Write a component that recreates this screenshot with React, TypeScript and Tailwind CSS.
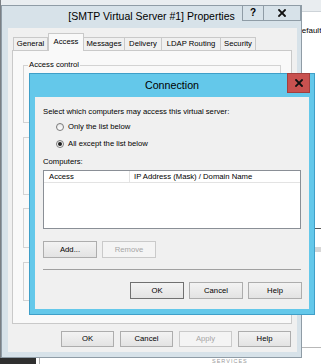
import React from "react";

const font = "font-['Liberation_Sans',Arial,sans-serif]";

type BtnProps = { label: string; w?: string; h?: string; isDefault?: boolean; disabled?: boolean };

const WinButton = ({ label, w = "w-[54px]", h = "h-[17px]", isDefault, disabled }: BtnProps) => {
  const border = isDefault ? "border-[#707070]" : disabled ? "border-[#cacaca]" : "border-[#adadad]";
  const face = disabled
    ? "bg-[#f4f4f4] text-[#a6a6a6]"
    : "bg-linear-to-b from-[#f3f3f3] to-[#e3e3e3] text-black";
  return (
    <div className={`${w} ${h} flex items-center justify-center border ${border} ${face}`}>
      {label}
    </div>
  );
};

const Radio = ({ checked, label }: { checked?: boolean; label: string }) => (
  <div className="flex items-center h-[10px] ml-[13px] gap-[4px]">
    <span className="w-[8px] h-[8px] rounded-full border border-[#7a7a7a] bg-linear-to-b from-[#e8e8e8] to-white flex items-center justify-center">
      {checked && <span className="w-[4px] h-[4px] rounded-full bg-[#1e1e1e]" />}
    </span>
    <span>{label}</span>
  </div>
);

const CloseX = ({ size = 8 }: { size?: number }) => (
  <svg width={size} height={size} viewBox="0 0 8 8">
    <path d="M1 1 L7 7 M7 1 L1 7" stroke="#111" strokeWidth="1.8" strokeLinecap="square" />
  </svg>
);

const tabs = [
  { label: "General", w: "w-[35px]" },
  { label: "Access", w: "w-[36px]", active: true },
  { label: "Messages", w: "w-[41px]" },
  { label: "Delivery", w: "w-[37px]" },
  { label: "LDAP Routing", w: "w-[59px]" },
  { label: "Security", w: "w-[35px]" },
];

const PropertiesWindow = () => (
  <div className="absolute left-[1px] top-[5px] w-[301px] h-[353px] border border-[#8f9ca6] bg-[#d7e2e9] flex flex-col">
    <div className="relative h-[22px] shrink-0 flex items-center justify-center text-[10.5px] text-black">
      [SMTP Virtual Server #1] Properties
      <div className="absolute right-0 top-[-1px] flex">
        <div className="w-[22px] h-[16px] border border-[#8f9ca6] flex items-center justify-center text-[10px] font-bold leading-none">
          ?
        </div>
        <div className="w-[37px] h-[16px] border border-l-0 border-[#8f9ca6] flex items-center justify-center">
          <CloseX />
        </div>
      </div>
    </div>

    <div className="ml-[6px] w-[289px] h-[324px] bg-[#f0f0f0] flex flex-col pt-[5px] pl-[4px]">
      <div className="relative z-10 flex items-end h-[17px] pl-[1px]">
        {tabs.map((t) =>
          t.active ? (
            <div
              key={t.label}
              className={`${t.w} h-[18px] -mb-[1px] bg-[#f9f9f9] border border-b-0 border-[#c9c9c9] flex items-start justify-center pt-[3px] leading-[10px]`}
            >
              {t.label}
            </div>
          ) : (
            <div
              key={t.label}
              className={`${t.w} h-[13px] bg-[#f0f0f0] border-t border-r border-[#c9c9c9] first:border-l flex items-center justify-center leading-[10px]`}
            >
              {t.label}
            </div>
          )
        )}
      </div>

      <div className="w-[280px] h-[274px] border border-[#c9c9c9] bg-[#f9f9f9] pl-[10px] pt-[9px] flex flex-col">
        <fieldset className="w-[258px] h-[63px] border border-[#d3d3d3]">
          <legend className="ml-[4px] px-[1px] leading-[10px]">Access control</legend>
        </fieldset>
        <div className="mt-[14px] w-[258px] h-[58px] border border-[#d3d3d3]" />
        <div className="mt-[13px] w-[258px] h-[40px] border border-[#d3d3d3]" />
        <div className="mt-[14px] w-[258px] h-[39px] border border-[#d3d3d3]" />
      </div>

      <div className="mt-[7px] flex justify-end gap-[6px] pr-[6px]">
        <WinButton label="OK" w="w-[53px]" h="h-[16px]" />
        <WinButton label="Cancel" w="w-[53px]" h="h-[16px]" />
        <WinButton label="Apply" w="w-[53px]" h="h-[16px]" disabled />
        <WinButton label="Help" w="w-[53px]" h="h-[16px]" />
      </div>
    </div>
  </div>
);

const ConnectionDialog = () => (
  <div className="absolute left-[29px] top-[73px] w-[286px] h-[242px] border border-[#3f9fc8] bg-[#64c8ea] flex flex-col">
    <div className="relative h-[23px] shrink-0 flex items-center justify-center text-[10.7px] text-black">
      Connection
      <div className="absolute right-[4px] top-[-1px] w-[23px] h-[20px] bg-[#c8514f] border border-[#a33f3d] flex items-center justify-center">
        <CloseX />
      </div>
    </div>

    <div className="ml-[5px] w-[274px] h-[212px] bg-[#f0f0f0] flex flex-col px-[8px] pt-[10px] leading-[10px]">
      <div>Select which computers may access this virtual server:</div>
      <div className="mt-[5px]">
        <Radio label="Only the list below" />
      </div>
      <div className="mt-[7px]">
        <Radio label="All except the list below" checked />
      </div>
      <div className="mt-[8px]">Computers:</div>

      <div className="mt-[3px] h-[59px] border border-[#8a8f96] bg-white flex flex-col">
        <div className="h-[12px] flex border-b border-[#e3e3e3]">
          <div className="w-[86px] border-r border-[#e3e3e3] pl-[5px] flex items-center">Access</div>
          <div className="flex-1 pl-[4px] flex items-center">IP Address (Mask) / Domain Name</div>
        </div>
      </div>

      <div className="mt-[12px] flex gap-[5px]">
        <WinButton label="Add..." />
        <WinButton label="Remove" disabled />
      </div>

      <div className="mt-[11px] h-px bg-[#a0a0a0]" />

      <div className="mt-[12px] flex justify-end gap-[5px] -mr-[1px]">
        <WinButton label="OK" isDefault />
        <WinButton label="Cancel" />
        <WinButton label="Help" />
      </div>
    </div>
  </div>
);

export default function App() {
  return (
    <div className={`relative w-[321px] h-[364px] overflow-hidden bg-white text-[7.7px] text-black ${font}`}>
      {/* desktop behind the windows */}
      <div className="absolute inset-x-0 top-0 h-[12px] bg-[#e9edf0] border-b border-[#cdd3d8]" />
      <div className="absolute left-[296px] top-[26px] text-[8px] leading-[10px]">Default</div>
      <div className="absolute left-[315px] top-[228px] w-[6px] h-px bg-[#5a5a5a]" />
      <div className="absolute left-[302px] top-[247px] w-[19px] h-[5px] bg-[#d8d8d8]" />
      <div className="absolute left-[302px] top-[347px] w-[19px] h-px bg-[#b8b8b8]" />
      <div className="absolute left-0 top-0 w-px h-full bg-[#7a7f84]" />
      <div className="absolute left-0 top-[358px] w-[36px] h-[6px] bg-[#2f2f2f]" />
      <div className="absolute left-[39px] top-[358px] w-px h-[6px] bg-[#b0b0b0]" />
      <div className="absolute left-[212px] top-[358px] text-[5.5px] leading-[6px] text-[#9a9a9a] tracking-[1px]">SERVICES</div>

      <PropertiesWindow />
      <ConnectionDialog />
    </div>
  );
}
